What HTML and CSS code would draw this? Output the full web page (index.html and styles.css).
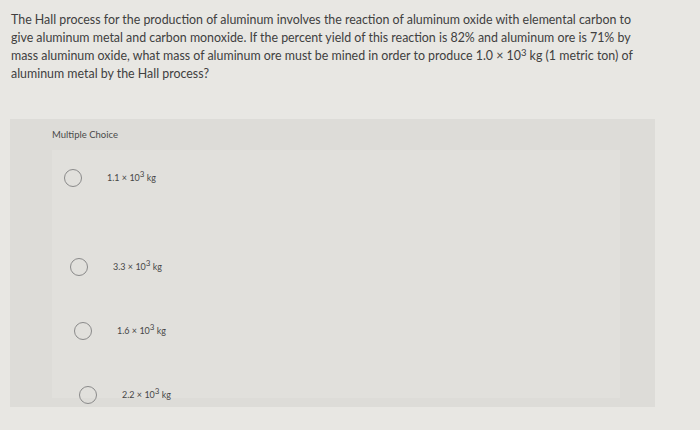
FILE: index.html
```html
<!DOCTYPE html>
<html>
<head>
<meta charset="utf-8">
<link rel="stylesheet" href="styles.css">
</head>
<body>
<div class="page">
  <p class="question">The Hall process for the production of aluminum involves the reaction of aluminum oxide with elemental carbon to give aluminum metal and carbon monoxide. If the percent yield of this reaction is 82% and aluminum ore is 71% by mass aluminum oxide, what mass of aluminum ore must be mined in order to produce 1.0 &times; 10<sup>3</sup> kg (1 metric ton) of aluminum metal by the Hall process?</p>
  <div class="panel">
    <div class="label">Multiple Choice</div>
    <div class="options">
      <div class="option"><span class="radio"></span><span class="answer">1.1 &times; 10<sup>3</sup> kg</span></div>
      <div class="option"><span class="radio"></span><span class="answer">3.3 &times; 10<sup>3</sup> kg</span></div>
      <div class="option"><span class="radio"></span><span class="answer">1.6 &times; 10<sup>3</sup> kg</span></div>
      <div class="option"><span class="radio"></span><span class="answer">2.2 &times; 10<sup>3</sup> kg</span></div>
    </div>
  </div>
</div>
</body>
</html>
```

FILE: styles.css
```css
html, body {
  margin: 0;
  padding: 0;
  background: #e8e7e3;
}
.page {
  width: 700px;
  height: 430px;
  overflow: hidden;
  font-family: Lato, "Liberation Sans", sans-serif;
  color: #404040;
}
.question {
  margin: 0;
  padding: 11px 50px 0 11px;
  font-size: 12.4px;
  line-height: 18px;
}
.question sup {
  font-size: 9.5px;
  vertical-align: 4px;
  line-height: 8px;
}
.panel {
  margin: 36px 45px 0 10px;
  background: #dddcd8;
  height: 288px;
  box-sizing: border-box;
  padding: 10px 0 0 42px;
  overflow: hidden;
}
.label {
  font-size: 9.5px;
  color: #4a4a4a;
}
.options {
  margin: 10px 35px 0 0;
  background: #e1e0dc;
  padding-top: 5px;
  height: 248px;
  box-sizing: border-box;
}
.option {
  display: flex;
  align-items: center;
  height: 64px;
  padding-left: 12px;
}
.option:first-child {
  height: 80px;
  align-items: flex-start;
  padding-top: 14px;
  box-sizing: border-box;
}
.option:nth-child(2) { padding-left: 18px; }
.option:nth-child(3) { padding-left: 22px; }
.option:nth-child(4) { padding-left: 27px; }
.radio {
  width: 16px;
  height: 16px;
  border: 1.5px solid #8a8a8a;
  border-radius: 50%;
  flex: none;
}
.answer {
  margin-left: 25px;
  font-size: 9px;
  line-height: 18px;
  color: #474747;
}
.answer sup {
  font-size: 8px;
  vertical-align: 4px;
  line-height: 8px;
}
```
